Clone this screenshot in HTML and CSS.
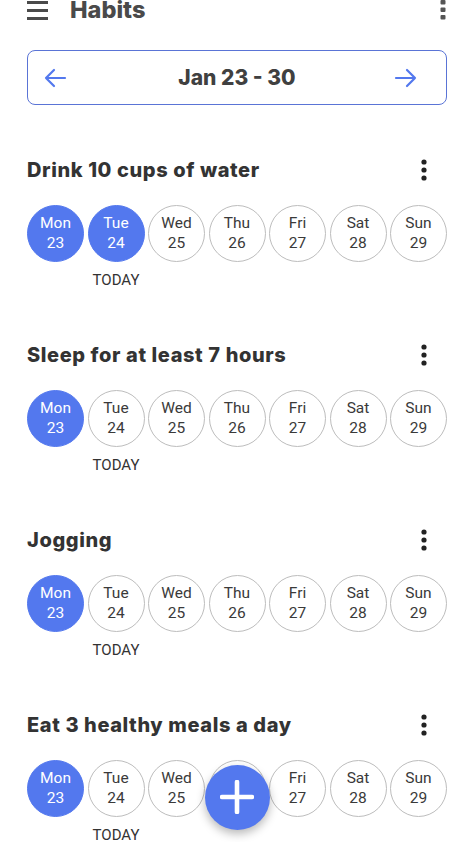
FILE: index.html
```html
<!DOCTYPE html>
<html>
<head>
<meta charset="utf-8">
<link rel="stylesheet" href="styles.css">
</head>
<body>
<div class="app">
  <header class="topbar">
    <svg class="menu" width="21" height="20" viewBox="0 0 21 20"><rect x="0" y="0" width="21" height="3" fill="#4a4a4a"/><rect x="0" y="8" width="21" height="3" fill="#4a4a4a"/><rect x="0" y="16" width="21" height="3" fill="#4a4a4a"/></svg>
    <h1 class="title">Habits</h1>
    <svg class="topkebab" width="6" height="20" viewBox="0 0 6 20"><rect x="0.5" y="0" width="5" height="4.5" rx="1" fill="#555"/><rect x="0.5" y="7.5" width="5" height="4.5" rx="1" fill="#555"/><rect x="0.5" y="15" width="5" height="4.5" rx="1" fill="#555"/></svg>
  </header>

  <div class="week">
    <svg class="arrow prev" width="24" height="20" viewBox="0 0 24 20"><path d="M22 10H3M11 2L3 10l8 8" fill="none" stroke="#5378ee" stroke-width="2.2" stroke-linecap="round" stroke-linejoin="round"/></svg>
    <span class="range">Jan 23 - 30</span>
    <svg class="arrow next" width="24" height="20" viewBox="0 0 24 20"><path d="M2 10h19M13 2l8 8-8 8" fill="none" stroke="#5378ee" stroke-width="2.2" stroke-linecap="round" stroke-linejoin="round"/></svg>
  </div>

  <section class="habit">
    <div class="habit-head"><h2>Drink 10 cups of water</h2><svg class="kebab" width="6" height="22" viewBox="0 0 6 22"><circle cx="3" cy="3" r="2.6" fill="#222"/><circle cx="3" cy="11" r="2.6" fill="#222"/><circle cx="3" cy="19" r="2.6" fill="#222"/></svg></div>
    <div class="days">
      <div class="day done"><span>Mon</span><span>23</span></div>
      <div class="day done"><span>Tue</span><span>24</span></div>
      <div class="day"><span>Wed</span><span>25</span></div>
      <div class="day"><span>Thu</span><span>26</span></div>
      <div class="day"><span>Fri</span><span>27</span></div>
      <div class="day"><span>Sat</span><span>28</span></div>
      <div class="day"><span>Sun</span><span>29</span></div>
    </div>
    <div class="today">TODAY</div>
  </section>

  <section class="habit">
    <div class="habit-head"><h2>Sleep for at least 7 hours</h2><svg class="kebab" width="6" height="22" viewBox="0 0 6 22"><circle cx="3" cy="3" r="2.6" fill="#222"/><circle cx="3" cy="11" r="2.6" fill="#222"/><circle cx="3" cy="19" r="2.6" fill="#222"/></svg></div>
    <div class="days">
      <div class="day done"><span>Mon</span><span>23</span></div>
      <div class="day"><span>Tue</span><span>24</span></div>
      <div class="day"><span>Wed</span><span>25</span></div>
      <div class="day"><span>Thu</span><span>26</span></div>
      <div class="day"><span>Fri</span><span>27</span></div>
      <div class="day"><span>Sat</span><span>28</span></div>
      <div class="day"><span>Sun</span><span>29</span></div>
    </div>
    <div class="today">TODAY</div>
  </section>

  <section class="habit">
    <div class="habit-head"><h2>Jogging</h2><svg class="kebab" width="6" height="22" viewBox="0 0 6 22"><circle cx="3" cy="3" r="2.6" fill="#222"/><circle cx="3" cy="11" r="2.6" fill="#222"/><circle cx="3" cy="19" r="2.6" fill="#222"/></svg></div>
    <div class="days">
      <div class="day done"><span>Mon</span><span>23</span></div>
      <div class="day"><span>Tue</span><span>24</span></div>
      <div class="day"><span>Wed</span><span>25</span></div>
      <div class="day"><span>Thu</span><span>26</span></div>
      <div class="day"><span>Fri</span><span>27</span></div>
      <div class="day"><span>Sat</span><span>28</span></div>
      <div class="day"><span>Sun</span><span>29</span></div>
    </div>
    <div class="today">TODAY</div>
  </section>

  <section class="habit">
    <div class="habit-head"><h2>Eat 3 healthy meals a day</h2><svg class="kebab" width="6" height="22" viewBox="0 0 6 22"><circle cx="3" cy="3" r="2.6" fill="#222"/><circle cx="3" cy="11" r="2.6" fill="#222"/><circle cx="3" cy="19" r="2.6" fill="#222"/></svg></div>
    <div class="days">
      <div class="day done"><span>Mon</span><span>23</span></div>
      <div class="day"><span>Tue</span><span>24</span></div>
      <div class="day"><span>Wed</span><span>25</span></div>
      <div class="day"><span>Thu</span><span>26</span></div>
      <div class="day"><span>Fri</span><span>27</span></div>
      <div class="day"><span>Sat</span><span>28</span></div>
      <div class="day"><span>Sun</span><span>29</span></div>
    </div>
    <div class="today">TODAY</div>
  </section>
</div>

<button class="fab" aria-label="Add habit">
  <svg width="34" height="34" viewBox="0 0 34 34"><path d="M17 2v30M2 17h30" stroke="#fff" stroke-width="4.6" stroke-linecap="round"/></svg>
</button>
</body>
</html>
```

FILE: styles.css
```css
* { box-sizing: border-box; }
html, body { margin: 0; padding: 0; background: #fff; }
body {
  width: 474px;
  height: 842px;
  overflow: hidden;
  font-family: "Roboto", "Liberation Sans", sans-serif;
  color: #3a3a3a;
}
.app {
  margin-top: -10px;
  padding: 0 27px;
}
.topbar {
  height: 40px;
  display: flex;
  align-items: center;
}
.menu { display: block; margin-top: 1px; }
.title {
  margin: 0 0 0 22px;
  font-family: "Inter", "Liberation Sans", sans-serif;
  font-weight: 800;
  font-size: 23.5px;
  color: #4a4a4a;
  line-height: 1;
  flex: 1;
}
.topkebab { display: block; margin-right: 1px; }

.week {
  margin-top: 20px;
  height: 55px;
  border: 1.5px solid #5a74d6;
  border-radius: 8px;
  display: grid;
  grid-template-columns: 1fr auto 1fr;
  align-items: center;
  padding: 0 15px;
}
.arrow { display: block; }
.arrow.next { justify-self: end; margin-right: 13px; }
.range {
  font-family: "Inter", "Liberation Sans", sans-serif;
  font-weight: 800;
  font-size: 21px;
  color: #404040;
}

.habit { margin-top: 51px; }
.habit + .habit { margin-top: 52px; }
.habit-head {
  height: 28px;
  display: flex;
  align-items: center;
  justify-content: space-between;
  padding-right: 20px;
}
.habit-head h2 {
  margin: 0;
  font-family: "Inter", "Liberation Sans", sans-serif;
  font-weight: 800;
  font-size: 20px;
  letter-spacing: 0.6px;
  color: #333;
}
.kebab { display: block; }
.days {
  margin-top: 21px;
  display: flex;
  justify-content: space-between;
}
.day {
  width: 57px;
  height: 57px;
  border-radius: 50%;
  border: 1.3px solid #bdbdbd;
  display: flex;
  flex-direction: column;
  align-items: center;
  justify-content: center;
  padding-bottom: 2px;
  font-size: 15.5px;
  line-height: 20px;
  color: #3a3a3a;
}
.day.done {
  background: #5378ee;
  border-color: #5378ee;
  color: #fff;
}
.today {
  margin-top: 9px;
  width: 57px;
  margin-left: 60.5px;
  text-align: center;
  font-size: 15px;
  line-height: 18px;
  color: #333;
  white-space: nowrap;
}

.fab {
  position: fixed;
  left: 204.5px;
  top: 764.5px;
  width: 65px;
  height: 65px;
  border-radius: 50%;
  border: none;
  padding: 0;
  background: #5378ee;
  box-shadow: 0 4px 10px rgba(0,0,0,0.28);
  display: flex;
  align-items: center;
  justify-content: center;
}
.fab svg { display: block; }
```
